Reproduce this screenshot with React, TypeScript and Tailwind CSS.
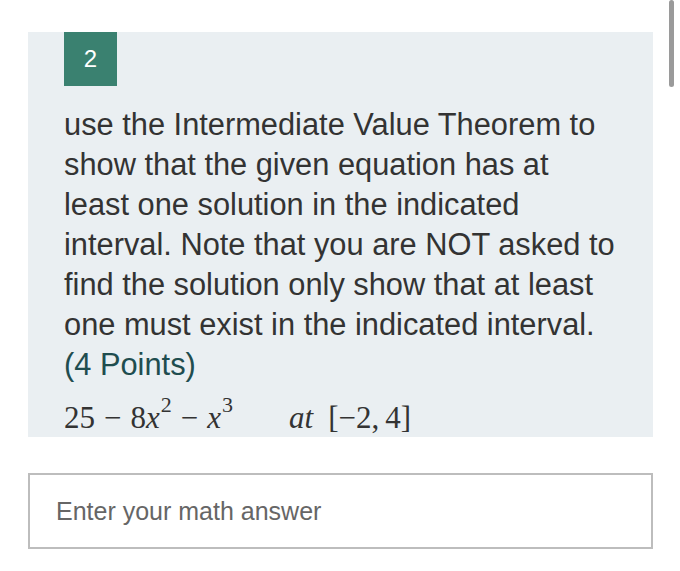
import React from "react";

export default function App() {
  return (
    <div className="relative w-[680px] h-[571px] bg-white overflow-hidden" style={{ fontFamily: '"Liberation Sans", Arial, sans-serif' }}>
      <div className="absolute right-[6px] top-0 w-[5px] h-[87px] rounded-full bg-[#9a9a9a]" />
      <div className="pt-[32px] px-[28px]">
        <div className="bg-[#eaeff2] w-[625px] pl-[36px] pr-[10px]">
          <div className="w-[53px] h-[54px] bg-[#3a8170] flex items-center justify-center text-white text-[24px]">2</div>
          <div className="mt-[19px] text-[30.8px] leading-[40px] text-[#333333] whitespace-nowrap">
            <div>use the Intermediate Value Theorem to</div>
            <div>show that the given equation has at</div>
            <div>least one solution in the indicated</div>
            <div>interval. Note that you are NOT asked to</div>
            <div>find the solution only show that at least</div>
            <div>one must exist in the indicated interval.</div>
            <div className="text-[#1f4d4f]">(4 Points)</div>
          </div>
          <div className="h-[52px] pt-[14px] flex items-center text-[31px] text-[#333333] whitespace-nowrap" style={{ fontFamily: '"Liberation Serif", "Times New Roman", serif' }}>
            <span>25</span>
            <span className="mx-[9px]">−</span>
            <span>8</span>
            <i>x</i>
            <sup className="text-[22px] top-[-0.6em] ml-[1px]">2</sup>
            <span className="mx-[9px]">−</span>
            <i>x</i>
            <sup className="text-[22px] top-[-0.6em] ml-[1px]">3</sup>
            <i className="ml-[56px]">at</i>
            <span className="ml-[15px]">[−2,</span>
            <span className="ml-[6px]">4]</span>
          </div>
        </div>
        <div className="mt-[36px] w-[625px] h-[76px] border-2 border-[#bdbdbd] flex items-center pl-[26px] pt-[2px] text-[25px] text-[#666666]">
          Enter your math answer
        </div>
      </div>
    </div>
  );
}
